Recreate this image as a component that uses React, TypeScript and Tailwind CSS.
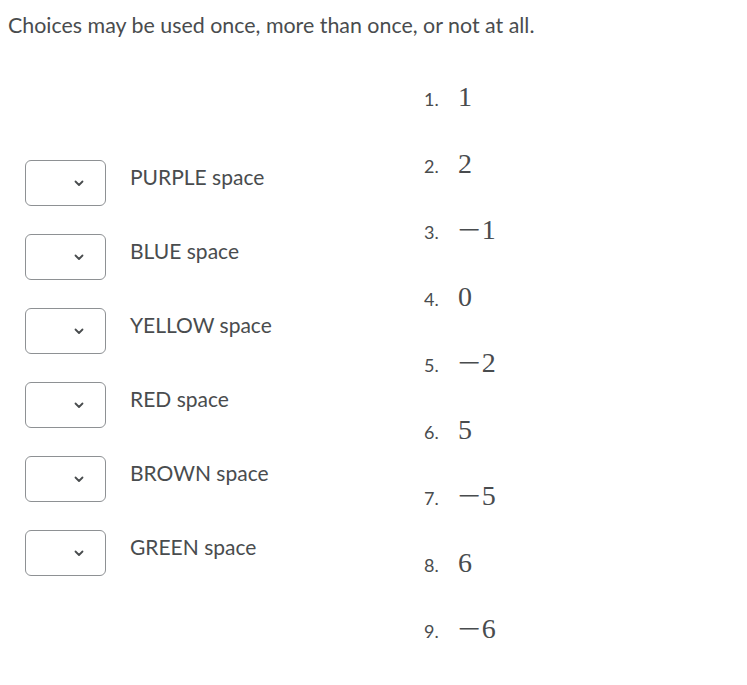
import React from 'react'

const spaces = ['PURPLE', 'BLUE', 'YELLOW', 'RED', 'BROWN', 'GREEN']
const choices = ['1', '2', '-1', '0', '-2', '5', '-5', '6', '-6']

function Chevron() {
  return (
    <svg width="10" height="7" viewBox="0 0 10 7" fill="none">
      <path d="M1.5 1.5 L5 5 L8.5 1.5" stroke="#494c4e" strokeWidth="1.8" strokeLinecap="round" strokeLinejoin="round" />
    </svg>
  )
}

function MathValue({ value }: { value: string }) {
  const negative = value.startsWith('-')
  const digits = negative ? value.slice(1) : value
  return (
    <span className="font-['Liberation_Serif','DejaVu_Serif',serif] text-[28px] leading-[34px]">
      {negative && <span className="mr-[8px] inline-block origin-left scale-x-[1.45]">−</span>}
      {digits}
    </span>
  )
}

export default function App() {
  return (
    <div className="min-h-[685px] w-[747px] bg-white text-[#494c4e] font-['Lato','Noto_Sans',sans-serif]">
      {/* Instructions */}
      <p className="pl-2 pt-[10px] text-[21.4px] leading-[30px]">
        Choices may be used once, more than once, or not at all.
      </p>

      <div className="flex">
        {/* LEFT — dropdowns */}
        <div className="flex w-[424px] flex-col gap-[28px] pl-[25px] pt-[120px]">
          {spaces.map((s) => (
            <div key={s} className="flex items-start gap-[24px]">
              <div className="flex h-[46px] w-[81px] items-center justify-end rounded-[6px] border border-[#8e9194] bg-white pr-[21px]">
                <Chevron />
              </div>
              <span className="pt-[2px] text-[21px] leading-[30px]">{s} space</span>
            </div>
          ))}
        </div>

        {/* RIGHT — numbered choices */}
        <ol className="flex flex-col pt-[40px]">
          {choices.map((c, i) => (
            <li key={i} className="flex h-[66.5px] items-baseline">
              <span className="w-[34px] text-[18px]">{i + 1}.</span>
              <MathValue value={c} />
            </li>
          ))}
        </ol>
      </div>
    </div>
  )
}
